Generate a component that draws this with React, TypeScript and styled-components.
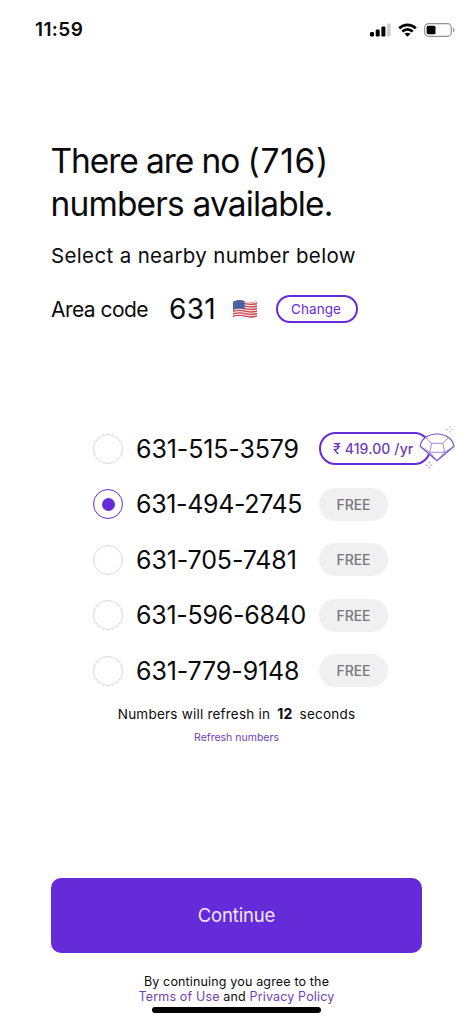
import React, { useState } from "react";
import styled, { createGlobalStyle, css } from "styled-components";

const purple = "#652bd9";
const linkPurple = "#6f42b8";

const GlobalStyle = createGlobalStyle`
  * { box-sizing: border-box; }
  body {
    margin: 0;
    background: #fff;
    color: #0b0b0d;
    font-family: Inter, "Noto Sans", sans-serif;
  }
  button { font-family: inherit; cursor: pointer; padding: 0; margin: 0; }
`;

const Screen = styled.main`
  position: relative;
  display: flex;
  flex-direction: column;
  width: 473px;
  height: 1024px;
  overflow: hidden;
  background: #fff;
`;

const StatusBar = styled.header`
  display: flex;
  justify-content: space-between;
  align-items: center;
  height: 59px;
  padding: 0 18px 0 35px;
`;

const Clock = styled.span`
  font-size: 19px;
  font-weight: 600;
  letter-spacing: 0.4px;
`;

const StatusIcons = styled.div`
  display: flex;
  align-items: center;
  gap: 7px;
`;

const Intro = styled.section`
  display: flex;
  flex-direction: column;
  padding: 81px 51px 0;
`;

const Title = styled.h1`
  margin: 0 0 0 -0.5px;
  font-size: 33.5px;
  line-height: 43px;
  font-weight: 400;
  white-space: nowrap;
`;

const TitlePart = styled.span<{ $spacing: number }>`
  letter-spacing: ${(p) => p.$spacing}px;
`;

const Subtitle = styled.p`
  margin: 15.5px 0 0;
  font-size: 20.5px;
  line-height: 28px;
  letter-spacing: 0.35px;
  white-space: nowrap;
`;

const AreaRow = styled.div`
  display: flex;
  align-items: center;
  height: 40px;
  margin-top: 19.5px;
`;

const AreaLabel = styled.span`
  width: 118px;
  font-size: 21px;
  letter-spacing: -0.55px;
  white-space: nowrap;
`;

const AreaCode = styled.span`
  width: 63px;
  font-size: 28px;
  letter-spacing: 0.3px;
`;

const ChangeButton = styled.button`
  width: 82px;
  height: 28px;
  margin-left: 18px;
  border: 2px solid ${purple};
  border-radius: 14px;
  background: #fff;
  color: ${purple};
  font-size: 13.5px;
  line-height: 22px;
  padding: 0 2px 1px 0;
  letter-spacing: 0.1px;
`;

const NumberList = styled.ul`
  list-style: none;
  margin: 92px 0 0;
  padding: 0 0 0 93px;
`;

const NumberRow = styled.li`
  display: flex;
  align-items: center;
  height: 55.5px;
`;

const Radio = styled.button<{ $selected: boolean }>`
  display: grid;
  place-items: center;
  width: 30px;
  height: 30px;
  border: 1px solid ${(p) => (p.$selected ? purple : "#d9d9db")};
  border-radius: 50%;
  background: #fff;
  &::after {
    content: "";
    width: 13px;
    height: 13px;
    border-radius: 50%;
    background: ${(p) => (p.$selected ? purple : "transparent")};
  }
`;

const PhoneNumber = styled.span<{ $spacing: number }>`
  width: 183px;
  margin-left: 13px;
  font-size: 25px;
  letter-spacing: ${(p) => p.$spacing}px;
  white-space: nowrap;
`;

const Badge = styled.span<{ $premium?: boolean }>`
  position: relative;
  display: flex;
  align-items: center;
  height: 33px;
  border-radius: 17px;
  white-space: nowrap;
  ${(p) =>
    p.$premium
      ? css`
          width: 112px;
          padding-left: 12px;
          border: 2px solid ${purple};
          color: #6a3cb8;
          font-size: 14px;
          font-weight: 500;
          letter-spacing: 0.13px;
        `
      : css`
          width: 69px;
          justify-content: center;
          background: #f0f0f1;
          color: #77777c;
          font-size: 14px;
          font-weight: 500;
          letter-spacing: -0.1px;
        `}
`;

const DiamondIcon = styled.svg`
  position: absolute;
  left: 98px;
  top: -10px;
`;

const RefreshNote = styled.p`
  margin: 5px 0 0;
  font-size: 13.5px;
  line-height: 20px;
  letter-spacing: 0.22px;
  text-align: center;
  strong { margin: 0 3px; font-size: 14px; font-weight: 700; }
`;

const RefreshLink = styled.button`
  align-self: center;
  height: 16px;
  margin-top: 5.5px;
  border: 0;
  background: none;
  color: ${linkPurple};
  font-size: 10.5px;
  letter-spacing: 0px;
`;

const ContinueButton = styled.button`
  height: 75px;
  margin: 132.5px 51px 0;
  border: 0;
  border-radius: 10px;
  background: ${purple};
  color: #f3e9ff;
  font-size: 18.5px;
  letter-spacing: -0.15px;
`;

const Legal = styled.p`
  margin: 21px 0 0;
  font-size: 12.5px;
  line-height: 15px;
  letter-spacing: 0.16px;
  text-align: center;
  a { color: ${linkPurple}; text-decoration: none; }
`;

const HomeIndicator = styled.div`
  align-self: center;
  width: 169px;
  height: 6px;
  margin-top: 3.5px;
  border-radius: 3px;
  background: #000;
`;

const Signal = () => (
  <svg width="22" height="14" viewBox="0 0 22 14">
    <rect x="1" y="9" width="4" height="4.5" rx="1.2" />
    <rect x="6.7" y="6.5" width="4" height="7" rx="1.2" />
    <rect x="12.4" y="3.4" width="4" height="10.1" rx="1.2" />
    <rect x="18" y="0.5" width="3.6" height="13" rx="1.2" fill="#cfcfcf" />
  </svg>
);

const Wifi = () => (
  <svg width="19" height="14" viewBox="0 0 19 14">
    <g fill="none" stroke="#000" strokeWidth="2.7">
      <path d="M1.2 5.3C6 .6 13 .6 17.8 5.3" />
      <path d="M4.3 8.6C7.3 5.7 11.7 5.7 14.7 8.6" />
    </g>
    <path d="M9.5 13.7 6.5 10.8C8.2 9.3 10.8 9.3 12.5 10.8Z" />
  </svg>
);

const Battery = () => (
  <svg width="31" height="14" viewBox="0 0 31 14">
    <rect x="0.7" y="0.7" width="26.6" height="12.6" rx="3.8" fill="none" stroke="#929292" strokeWidth="1.2" />
    <rect x="2.7" y="2.7" width="8.8" height="8.6" rx="1.5" />
    <path d="M29 4.8c2 .6 2 3.8 0 4.4Z" fill="#999" />
  </svg>
);

const Flag = () => (
  <svg width="26" height="19" viewBox="0 0 26 19">
    <clipPath id="wave">
      <path d="M1 2C5-.1 8-.1 13 1.4C18 2.8 21 2.6 25 1.2V16.8C21 18.4 18 18.5 13 17C8 15.6 5 15.7 1 17.5Z" />
    </clipPath>
    <g clipPath="url(#wave)">
      <rect width="26" height="19" fill="#f1e7e8" />
      {[0, 1, 2, 3, 4, 5, 6].map((i) => (
        <path
          key={i}
          transform={`translate(0 ${i * 2.52})`}
          d="M0 1.8C5-.4 8-.4 13 1.1C18 2.5 21 2.3 26 .6"
          fill="none"
          stroke="#cf4650"
          strokeWidth="1.35"
        />
      ))}
      <path d="M0 0H12.5V9.5C8 8.1 5 8.2 0 10.4Z" fill="#3d5ea0" />
      <g fill="none" stroke="#7f96c6" strokeWidth="0.6" strokeDasharray="0.8 1.4">
        <path d="M2 3C6 1.2 8 1.5 12 2.6M2 5.2C6 3.4 8 3.7 12 4.8M2 7.4C6 5.6 8 5.9 12 7" />
      </g>
    </g>
  </svg>
);

const Diamond = () => (
  <DiamondIcon width="40" height="46" viewBox="0 0 40 46" fill="none" stroke="#7550c9" strokeLinejoin="round">
    <path
      d="M1.2 22.3C1.6 18.8 3.4 15.6 6.5 13.5C10 11 14 10 18 10S26 11 29.5 13.5C32.8 15.6 34.4 18.8 35 22.3L18 36.8Z"
      fill="#fff"
      strokeWidth="1.2"
    />
    <path
      d="M6.5 13.5 12.7 19.3 10.7 28.3 1.2 22.3M29.5 13.5 23.8 19.3 25.7 28.3 35 22.3M12.7 19.3H23.8M10.7 28.3H25.7M10.7 28.3 18 36.8 25.7 28.3"
      strokeWidth="0.8"
      stroke="#8a6cd2"
    />
    <path d="M31 2V4.5M31 7V9.5M27.3 5.7H29.8M32.2 5.7H34.7" stroke="#a796de" strokeWidth="0.9" strokeDasharray="1.6 0.6" />
    <path d="M10.2 37.5V40M10.2 42.5V45M6.5 41.2H9M11.4 41.2H13.9" stroke="#8d73d2" strokeWidth="0.9" strokeDasharray="1.6 0.6" />
  </DiamondIcon>
);

const numbers = [
  { value: "631-515-3579", price: "₹ 419.00 /yr", spacing: -0.12 },
  { value: "631-494-2745", spacing: -0.35 },
  { value: "631-705-7481", spacing: -0.12 },
  { value: "631-596-6840", spacing: -0.27 },
  { value: "631-779-9148", spacing: -0.12 },
];

export default function App() {
  const [selected, setSelected] = useState(1);
  return (
    <Screen>
      <GlobalStyle />
      <StatusBar>
        <Clock>11:59</Clock>
        <StatusIcons>
          <Signal />
          <Wifi />
          <Battery />
        </StatusIcons>
      </StatusBar>
      <Intro>
        <Title>
          <TitlePart $spacing={-1.08}>There are no </TitlePart>
          <TitlePart $spacing={0.7}>(716)</TitlePart>
          <br />
          <TitlePart $spacing={-0.85}>numbers available.</TitlePart>
        </Title>
        <Subtitle>Select a nearby number below</Subtitle>
        <AreaRow>
          <AreaLabel>Area code</AreaLabel>
          <AreaCode>631</AreaCode>
          <Flag />
          <ChangeButton>Change</ChangeButton>
        </AreaRow>
      </Intro>
      <NumberList>
        {numbers.map((n, i) => (
          <NumberRow key={n.value}>
            <Radio $selected={i === selected} aria-label={n.value} onClick={() => setSelected(i)} />
            <PhoneNumber $spacing={n.spacing}>{n.value}</PhoneNumber>
            <Badge $premium={!!n.price}>
              {n.price ?? "FREE"}
              {n.price && <Diamond />}
            </Badge>
          </NumberRow>
        ))}
      </NumberList>
      <RefreshNote>
        Numbers will refresh in <strong>12</strong> seconds
      </RefreshNote>
      <RefreshLink>Refresh numbers</RefreshLink>
      <ContinueButton>Continue</ContinueButton>
      <Legal>
        By continuing you agree to the
        <br />
        <a href="#terms">Terms of Use</a> and <a href="#privacy">Privacy Policy</a>
      </Legal>
      <HomeIndicator />
    </Screen>
  );
}
